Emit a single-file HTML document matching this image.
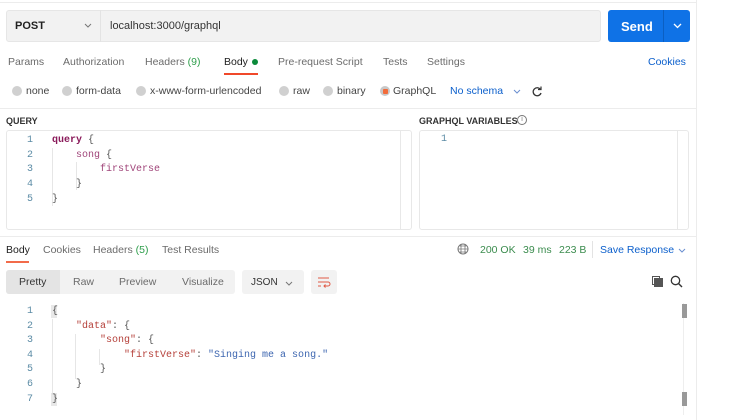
<!DOCTYPE html>
<html><head><meta charset="utf-8"><style>
*{margin:0;padding:0;box-sizing:border-box}
body{width:730px;height:420px;background:#fff;font-family:"Liberation Sans",sans-serif;font-size:10.5px;color:#212121;position:relative;overflow:hidden}
.a{position:absolute;white-space:nowrap}
.g{color:#6b6b6b}
.m{font-family:"Liberation Mono",monospace;font-size:10px}
.ln{color:#5b8ba5;width:12px;text-align:right}
.rad{position:absolute;width:10px;height:10px;border-radius:50%;background:#d0d0d0}
</style></head><body>
<div class="a" style="left:0;top:2px;width:696px;height:1px;background:#ececec"></div>
<div class="a" style="left:696px;top:0;width:1px;height:420px;background:#ececec"></div>

<div class="a" style="left:6px;top:10px;width:595px;height:32px;background:#f2f2f2;border:1px solid #e6e6e6;border-radius:3px"></div>
<div class="a" style="left:100px;top:10px;width:1px;height:32px;background:#e3e3e3"></div>
<div class="a" style="left:15px;top:20px;font-weight:bold;font-size:11px">POST</div>
<svg class="a" style="left:84px;top:23px" width="8" height="5"><path d="M1 1l3 3 3-3" stroke="#777" fill="none"/></svg>
<div class="a" style="left:110px;top:20px;color:#333;font-size:11px">localhost:3000/graphql</div>
<div class="a" style="left:608px;top:10px;width:82px;height:32px;background:#0f72e6;border-radius:3px"></div>
<div class="a" style="left:663px;top:10px;width:1px;height:32px;background:#0b5fc2"></div>
<div class="a" style="left:621px;top:19px;color:#fff;font-weight:bold;font-size:13px">Send</div>
<svg class="a" style="left:673px;top:23px" width="9" height="6"><path d="M1 1l3.5 3.5 3.5-3.5" stroke="#fff" fill="none" stroke-width="1.3"/></svg>

<div class="a g" style="left:8px;top:56px">Params</div>
<div class="a g" style="left:63px;top:56px">Authorization</div>
<div class="a g" style="left:145px;top:56px">Headers <span style="color:#2e9e4b">(9)</span></div>
<div class="a" style="left:224px;top:56px">Body</div>
<div class="a" style="left:252px;top:59px;width:6px;height:6px;border-radius:50%;background:#0a8a3a"></div>
<div class="a" style="left:224px;top:73px;width:34px;height:2px;background:#f0482a"></div>
<div class="a g" style="left:278px;top:56px">Pre-request Script</div>
<div class="a g" style="left:383px;top:56px">Tests</div>
<div class="a g" style="left:427px;top:56px">Settings</div>
<div class="a" style="left:648px;top:56px;color:#0b5fcc">Cookies</div>

<div class="rad" style="left:12px;top:86px"></div><div class="a" style="left:26px;top:85px;color:#444">none</div>
<div class="rad" style="left:62px;top:86px"></div><div class="a" style="left:76px;top:85px;color:#444">form-data</div>
<div class="rad" style="left:136px;top:86px"></div><div class="a" style="left:150px;top:85px;color:#444">x-www-form-urlencoded</div>
<div class="rad" style="left:279px;top:86px"></div><div class="a" style="left:293px;top:85px;color:#444">raw</div>
<div class="rad" style="left:323px;top:86px"></div><div class="a" style="left:337px;top:85px;color:#444">binary</div>
<div class="rad" style="left:380px;top:86px;background:#c8c8c8"></div><div class="a" style="left:383px;top:89px;width:5px;height:5px;background:#f26b3a;border-radius:1px"></div>
<div class="a" style="left:393px;top:85px;color:#444">GraphQL</div>
<div class="a" style="left:450px;top:85px;color:#0b5fcc">No schema</div>
<svg class="a" style="left:513px;top:89px" width="8" height="5"><path d="M1 1l3 3 3-3" stroke="#6a8fd0" fill="none"/></svg>
<svg class="a" style="left:531px;top:86px" width="12" height="12"><path d="M9.5 3.5A4 4 0 1 0 10 7" stroke="#333" fill="none" stroke-width="1.3"/><path d="M7 3.5h3v-3" stroke="#333" fill="none" stroke-width="1.2"/></svg>
<div class="a" style="left:0;top:108px;width:696px;height:1px;background:#ececec"></div>

<div class="a" style="left:6px;top:116px;font-size:9px;font-weight:bold;color:#333">QUERY</div>
<div class="a" style="left:419px;top:116px;font-size:9px;font-weight:bold;color:#333">GRAPHQL VARIABLES</div>
<div class="a" style="left:517px;top:115px;width:10px;height:10px;border:1px solid #777;border-radius:50%;font-size:7px;text-align:center;line-height:8px;color:#777">i</div>
<div class="a" style="left:6px;top:130px;width:406px;height:100px;border:1px solid #e8e8e8;border-radius:3px"></div>
<div class="a" style="left:400px;top:131px;width:1px;height:98px;background:#e8e8e8"></div>
<div class="a" style="left:419px;top:130px;width:270px;height:100px;border:1px solid #e8e8e8;border-radius:3px"></div>
<div class="a" style="left:677px;top:131px;width:1px;height:98px;background:#e8e8e8"></div>
<div class="a" style="left:52px;top:148px;width:1px;height:58px;background:#e6e6e6"></div>
<div class="a" style="left:76px;top:162px;width:1px;height:28px;background:#e6e6e6"></div>
<div class="a m" style="left:21px;top:134px;line-height:14.7px">
<div class="ln">1</div><div class="ln">2</div><div class="ln">3</div><div class="ln">4</div><div class="ln">5</div></div>
<div class="a m" style="left:52px;top:134px;line-height:14.7px;white-space:pre;color:#555"><span style="color:#8a1a5a;font-weight:bold">query</span> {
    <span style="color:#a0457a">song</span> {
        <span style="color:#a0457a">firstVerse</span>
    }
}</div>
<div class="a m ln" style="left:435px;top:134px">1</div>
<div class="a" style="left:0;top:236px;width:696px;height:1px;background:#ececec"></div>

<div class="a" style="left:6px;top:244px">Body</div>
<div class="a" style="left:6px;top:261px;width:23px;height:2px;background:#f26b4a"></div>
<div class="a g" style="left:43px;top:244px">Cookies</div>
<div class="a g" style="left:93px;top:244px">Headers <span style="color:#2e9e4b">(5)</span></div>
<div class="a g" style="left:162px;top:244px">Test Results</div>
<svg class="a" style="left:457px;top:243px" width="12" height="12"><circle cx="6" cy="6" r="5" stroke="#777" fill="none"/><path d="M1 6h10M3 3h6M3 9h6M4 1.5v9M8 1.5v9" stroke="#777" fill="none" stroke-width=".8"/></svg>
<div class="a" style="left:480px;top:244px;color:#3b8c4e">200 OK</div>
<div class="a" style="left:523px;top:244px;color:#3b8c4e">39 ms</div>
<div class="a" style="left:559px;top:244px;color:#3b8c4e">223 B</div>
<div class="a" style="left:592px;top:241px;width:1px;height:17px;background:#e3e3e3"></div>
<div class="a" style="left:600px;top:244px;color:#0b5fcc">Save Response</div>
<svg class="a" style="left:678px;top:248px" width="8" height="5"><path d="M1 1l3 3 3-3" stroke="#6a8fd0" fill="none"/></svg>

<div class="a" style="left:6px;top:270px;width:229px;height:24px;background:#f2f2f2;border-radius:3px"></div>
<div class="a" style="left:6px;top:270px;width:54px;height:24px;background:#e4e4e4;border-radius:3px 0 0 3px"></div>
<div class="a" style="left:19px;top:276px;color:#333">Pretty</div>
<div class="a g" style="left:73px;top:276px">Raw</div>
<div class="a g" style="left:119px;top:276px">Preview</div>
<div class="a g" style="left:182px;top:276px">Visualize</div>
<div class="a" style="left:242px;top:270px;width:62px;height:24px;background:#f2f2f2;border-radius:3px"></div>
<div class="a" style="left:251px;top:277px;font-size:10px;color:#333">JSON</div>
<svg class="a" style="left:285px;top:281px" width="8" height="5"><path d="M1 1l3 3 3-3" stroke="#777" fill="none"/></svg>
<div class="a" style="left:311px;top:270px;width:26px;height:24px;background:#f2f2f2;border-radius:3px"></div>
<svg class="a" style="left:317px;top:276px" width="14" height="12"><path d="M1 2h11M1 6h10a2 2 0 0 1 0 4H7M1 10h3" stroke="#e05a46" fill="none" stroke-width="1"/><path d="M8.5 8.5L7 10l1.5 1.5" stroke="#e05a46" fill="none"/></svg>
<div class="a" style="left:652px;top:276px;width:8px;height:9px;border:1px solid #555"></div>
<div class="a" style="left:654px;top:278px;width:9px;height:9px;background:#555"></div>
<svg class="a" style="left:670px;top:275px" width="13" height="13"><circle cx="5.5" cy="5.5" r="4.2" stroke="#333" fill="none" stroke-width="1.3"/><path d="M8.5 8.5l3.5 3.5" stroke="#333" stroke-width="1.4"/></svg>

<div class="a" style="left:683px;top:303px;width:1px;height:112px;background:#eee"></div>
<div class="a" style="left:682px;top:304px;width:5px;height:14px;background:#999"></div>
<div class="a" style="left:682px;top:392px;width:5px;height:14px;background:#999"></div>

<div class="a" style="left:52px;top:319px;width:1px;height:74px;background:#e6e6e6"></div>
<div class="a" style="left:75px;top:334px;width:1px;height:45px;background:#e6e6e6"></div>
<div class="a" style="left:99px;top:349px;width:1px;height:16px;background:#e6e6e6"></div>
<div class="a" style="left:51px;top:305px;width:6px;height:13px;background:#e8e8e8"></div>
<div class="a" style="left:51px;top:393px;width:6px;height:13px;background:#e8e8e8"></div>
<div class="a m" style="left:21px;top:305px;line-height:14.6px">
<div class="ln">1</div><div class="ln">2</div><div class="ln">3</div><div class="ln">4</div><div class="ln">5</div><div class="ln">6</div><div class="ln">7</div></div>
<div class="a m" style="left:52px;top:305px;line-height:14.6px;white-space:pre;color:#555">{
    <span style="color:#b5403a">"data"</span>: {
        <span style="color:#b5403a">"song"</span>: {
            <span style="color:#b5403a">"firstVerse"</span>: <span style="color:#3d66b0">"Singing me a song."</span>
        }
    }
}</div>
</body></html>
